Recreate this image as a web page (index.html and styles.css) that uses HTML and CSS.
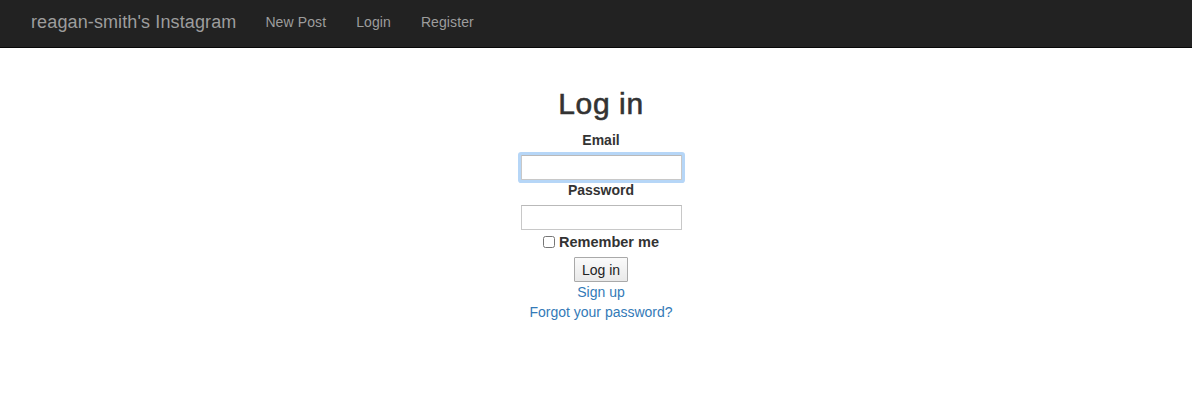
FILE: index.html
```html
<!DOCTYPE html>
<html>
<head>
<meta charset="utf-8">
<link rel="stylesheet" href="styles.css">
</head>
<body>
<nav class="navbar">
  <a class="brand" href="#">reagan-smith's Instagram</a>
  <ul class="nav">
    <li><a href="#">New Post</a></li>
    <li><a href="#">Login</a></li>
    <li><a href="#">Register</a></li>
  </ul>
</nav>
<main class="content">
  <h2 class="title">Log in</h2>
  <form class="form">
    <div class="field">
      <label for="email">Email</label>
      <input id="email" class="input focused" type="email">
    </div>
    <div class="field">
      <label for="pw">Password</label>
      <input id="pw" class="input" type="password">
    </div>
    <div class="check">
      <input id="rem" type="checkbox" class="checkbox">
      <label for="rem">Remember me</label>
    </div>
    <div class="actions">
      <button type="button" class="btn">Log in</button>
    </div>
  </form>
  <div class="links">
    <a href="#">Sign up</a>
    <a href="#">Forgot your password?</a>
  </div>
</main>
</body>
</html>
```

FILE: styles.css
```css
html, body {
  margin: 0;
  padding: 0;
  background: #fff;
  font-family: "Liberation Sans", Arial, sans-serif;
  font-size: 14px;
  line-height: 20px;
  color: #333;
}
.navbar {
  height: 44px;
  background: #222;
  border-bottom: 1px solid #080808;
  display: flex;
  align-items: center;
  padding: 0 15px 3px 16px;
}
.brand {
  font-size: 18px;
  color: #9d9d9d;
  text-decoration: none;
  padding: 0 15px;
  line-height: 20px;
  letter-spacing: 0.12px;
}
.nav {
  list-style: none;
  margin: 0 0 0 -1px;
  padding: 0;
  display: flex;
}
.nav a {
  display: block;
  padding: 0 15px;
  color: #9d9d9d;
  text-decoration: none;
  font-size: 14px;
  letter-spacing: 0.1px;
}
.content {
  display: flex;
  flex-direction: column;
  align-items: center;
  text-align: center;
  padding-top: 19px;
  padding-left: 10px;
}
.title {
  font-size: 30px;
  font-weight: 400;
  line-height: 33px;
  margin: 20px 0 10px;
  color: #333;
  letter-spacing: 0.6px;
  -webkit-text-stroke: 0.6px #333;
}
.form {
  display: flex;
  flex-direction: column;
  align-items: center;
}
.field {
  display: flex;
  flex-direction: column;
  align-items: center;
}
.field label {
  font-weight: bold;
  margin-bottom: 5px;
  line-height: 20px;
}
.input {
  box-sizing: border-box;
  width: 161px;
  height: 25px;
  border: 1px solid #c8c8c8;
  border-top-color: #b9b9b9;
  padding: 2px 3px;
  margin: 0;
  font-size: 13px;
  font-family: inherit;
  background: #fff;
  outline: none;
}
.input.focused {
  box-shadow: 0 0 0 3px #b6d6f7;
  border-radius: 1px;
}
.check {
  display: flex;
  align-items: center;
  margin-top: 2px;
  height: 20px;
}
.check label {
  font-weight: bold;
  line-height: 20px;
  margin-left: 4px;
  font-size: 14.5px;
}
.checkbox {
  margin: 0;
  width: 12px;
  height: 12px;
}
.actions {
  margin-top: 5px;
}
.btn {
  font-family: inherit;
  font-size: 14px;
  color: #222;
  height: 25px;
  padding: 0 7px;
  background: linear-gradient(#fafafa, #e9e9e9);
  border: 1px solid #a9a9a9;
  border-radius: 1px;
}
.links {
  display: flex;
  flex-direction: column;
  align-items: center;
}
.links a {
  color: #337ab7;
  text-decoration: none;
  line-height: 20px;
}
```
